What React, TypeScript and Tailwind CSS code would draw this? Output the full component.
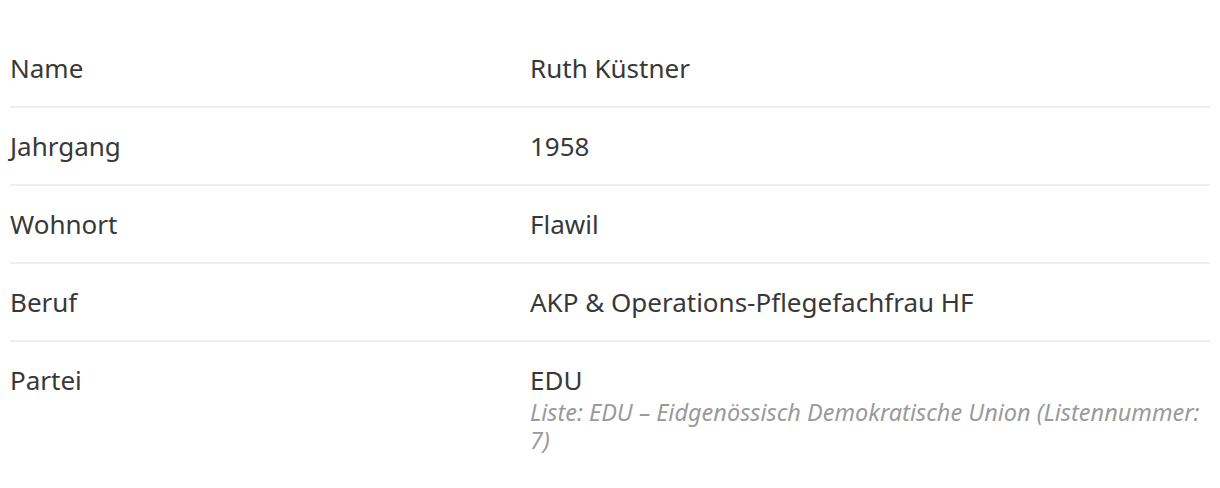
import React from 'react';

interface Row {
  label: string;
  value: string;
  note?: string;
}

const rows: Row[] = [
  { label: 'Name', value: 'Ruth Küstner' },
  { label: 'Jahrgang', value: '1958' },
  { label: 'Wohnort', value: 'Flawil' },
  { label: 'Beruf', value: 'AKP & Operations-Pflegefachfrau HF' },
  {
    label: 'Partei',
    value: 'EDU',
    note: 'Liste: EDU – Eidgenössisch Demokratische Union (Listennummer: 7)',
  },
];

export default function App() {
  return (
    <div className="min-h-screen bg-white px-[10px] pt-[30px] font-['Noto_Sans',sans-serif] text-[#383838]">
      <dl>
        {rows.map((row, i) => (
          <div
            key={row.label}
            className={`grid grid-cols-[520px_1fr] py-[20px] ${
              i < rows.length - 1 ? 'border-b-2 border-[#eeeeee]' : ''
            }`}
          >
            <dt className="text-[26px] leading-[36px]">{row.label}</dt>
            <dd className="text-[26px] leading-[36px]">
              {row.value}
              {row.note && (
                <span className="block text-[23.5px] leading-[28px] italic text-[#9a9a9a]">{row.note}</span>
              )}
            </dd>
          </div>
        ))}
      </dl>
    </div>
  );
}
